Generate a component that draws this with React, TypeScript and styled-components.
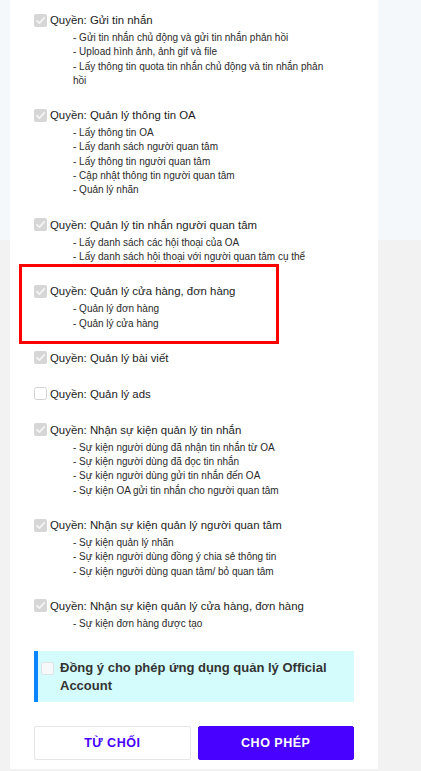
import React, { FC } from "react"
import styled, { createGlobalStyle } from "styled-components"

type Permission = {
  title: string
  items: string[]
  checked?: boolean
  highlight?: boolean
}

const permissions: Permission[] = [
  {
    title: "Quyền: Gửi tin nhắn",
    items: [
      "Gửi tin nhắn chủ động và gửi tin nhắn phản hồi",
      "Upload hình ảnh, ảnh gif và file",
      "Lấy thông tin quota tin nhắn chủ động và tin nhắn phản hồi",
    ],
    checked: true,
  },
  {
    title: "Quyền: Quản lý thông tin OA",
    items: [
      "Lấy thông tin OA",
      "Lấy danh sách người quan tâm",
      "Lấy thông tin người quan tâm",
      "Cập nhật thông tin người quan tâm",
      "Quản lý nhãn",
    ],
    checked: true,
  },
  {
    title: "Quyền: Quản lý tin nhắn người quan tâm",
    items: [
      "Lấy danh sách các hội thoại của OA",
      "Lấy danh sách hội thoại với người quan tâm cụ thể",
    ],
    checked: true,
  },
  {
    title: "Quyền: Quản lý cửa hàng, đơn hàng",
    items: ["Quản lý đơn hàng", "Quản lý cửa hàng"],
    checked: true,
    highlight: true,
  },
  { title: "Quyền: Quản lý bài viết", items: [], checked: true },
  { title: "Quyền: Quản lý ads", items: [], checked: false },
  {
    title: "Quyền: Nhận sự kiện quản lý tin nhắn",
    items: [
      "Sự kiện người dùng đã nhận tin nhắn từ OA",
      "Sự kiện người dùng đã đọc tin nhắn",
      "Sự kiện người dùng gửi tin nhắn đến OA",
      "Sự kiện OA gửi tin nhắn cho người quan tâm",
    ],
    checked: true,
  },
  {
    title: "Quyền: Nhận sự kiện quản lý người quan tâm",
    items: [
      "Sự kiện quản lý nhãn",
      "Sự kiện người dùng đồng ý chia sẻ thông tin",
      "Sự kiện người dùng quan tâm/ bỏ quan tâm",
    ],
    checked: true,
  },
  {
    title: "Quyền: Nhận sự kiện quản lý cửa hàng, đơn hàng",
    items: ["Sự kiện đơn hàng được tạo"],
    checked: true,
  },
]

const CheckIcon: FC<{ checked?: boolean }> = ({ checked }) =>
  checked ? (
    <svg width="13" height="13" viewBox="0 0 13 13">
      <rect x="0" y="0" width="13" height="13" rx="2" fill="#d6d6d6" />
      <path
        d="M3 6.8 L5.4 9.2 L10.2 3.8"
        fill="none"
        stroke="#f4f4f4"
        strokeWidth="1.8"
        strokeLinecap="round"
        strokeLinejoin="round"
      />
    </svg>
  ) : (
    <svg width="13" height="13" viewBox="0 0 13 13">
      <rect x="0.5" y="0.5" width="12" height="12" rx="2" fill="#fff" stroke="#d2d2d2" />
    </svg>
  )

const App: FC = () => {
  return (
    <>
      <GlobalStyle />
      <Page>
        <Card>
          {permissions.map((p) => (
            <Section key={p.title} $highlight={p.highlight}>
              <TitleRow>
                <CheckIcon checked={p.checked} />
                <Title>{p.title}</Title>
              </TitleRow>
              {p.items.length > 0 && (
                <ItemList>
                  {p.items.map((item) => (
                    <Item key={item}>- {item}</Item>
                  ))}
                </ItemList>
              )}
            </Section>
          ))}

          <Agreement>
            <AgreeBox />
            <AgreeText>Đồng ý cho phép ứng dụng quản lý Official Account</AgreeText>
          </Agreement>

          <Actions>
            <ActionButton>TỪ CHỐI</ActionButton>
            <ActionButton $primary>CHO PHÉP</ActionButton>
          </Actions>
        </Card>
      </Page>
    </>
  )
}

export default App

const GlobalStyle = createGlobalStyle`
  body {
    margin: 0;
    font-family: "Liberation Sans", Arial, sans-serif;
    background: #f2f2f2;
  }
`

const Page = styled.div`
  min-height: 771px;
  padding: 0 43px 2px 10px;
  background: linear-gradient(to bottom, #f4f8fb 0, #f4f8fb 240px, #f2f2f2 240px);
`

const Card = styled.div`
  background: #fff;
  padding: 11px 24px 9px 24px;
`

const Section = styled.div<{ $highlight?: boolean }>`
  position: relative;
  padding-bottom: 18px;

  ${({ $highlight }) =>
    $highlight &&
    `
    &::after {
      content: "";
      position: absolute;
      top: -18px;
      bottom: 5px;
      left: -15px;
      width: 260px;
      border: 3px solid #ff0000;
      box-sizing: border-box;
      pointer-events: none;
    }
  `}
`

const TitleRow = styled.div`
  display: flex;
  align-items: center;
  height: 18px;
  gap: 3px;
`

const Title = styled.span`
  font-size: 11.4px;
  color: #222;
`

const ItemList = styled.ul`
  list-style: none;
  margin: 2px 0 0 0;
  padding: 0 18px 0 39px;
`

const Item = styled.li`
  font-size: 10px;
  line-height: 14.3px;
  color: #2a2a2a;
`

const Agreement = styled.div`
  display: flex;
  align-items: flex-start;
  gap: 6px;
  margin-top: 2px;
  padding: 8px 10px 7px 3px;
  background: #d4fcfc;
  border-left: 4px solid #0a84ff;
`

const AgreeBox = styled.span`
  flex: none;
  width: 11px;
  height: 11px;
  margin-top: 3px;
  border: 1px solid #dde3e6;
  border-radius: 2px;
  background: #f6f8f9;
`

const AgreeText = styled.span`
  font-size: 13px;
  line-height: 18px;
  font-weight: bold;
  color: #333;
`

const Actions = styled.div`
  display: flex;
  gap: 7px;
  margin-top: 24px;
`

const ActionButton = styled.button<{ $primary?: boolean }>`
  flex: 1;
  height: 34px;
  border-radius: 2px;
  font-family: "Liberation Sans", Arial, sans-serif;
  font-size: 12.5px;
  font-weight: bold;
  letter-spacing: 0.5px;
  border: 1px solid ${({ $primary }) => ($primary ? "#4800ff" : "#e6e6e6")};
  background: ${({ $primary }) => ($primary ? "#4800ff" : "#fff")};
  color: ${({ $primary }) => ($primary ? "#fff" : "#4800ff")};
`
